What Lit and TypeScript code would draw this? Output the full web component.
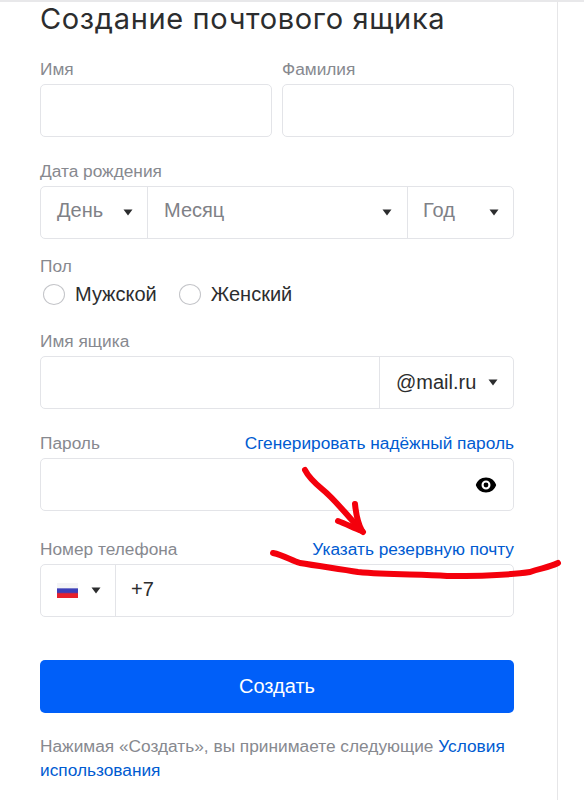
import { LitElement, html, css, svg } from "lit";
import { customElement } from "lit/decorators.js";

const caret = html`<svg class="caret" width="10" height="7" viewBox="0 0 10 7"><path d="M0.5 0.5h9L5 6.5z" fill="#2c2d2e"/></svg>`;

@customElement("app-root")
export class AppRoot extends LitElement {
  static styles = css`
    :host { display: block; position: relative; width: 584px; height: 800px; overflow: hidden; background: #fff;
      font-family: "Liberation Sans", Arial, sans-serif; color: #2c2d2e; }
    .panel { box-sizing: border-box; width: 558px; height: 800px; padding: 0 43px 0 40px; border-right: 1px solid #e6e6e8; border-top: 2px solid #e8e8ea; }
    .rule { position: absolute; top: 0; left: 558px; right: 0; height: 2px; background: #e8e8ea; }
    h1 { margin: 0; font: 400 29px/34px "Inter", "Noto Sans", sans-serif; letter-spacing: 0.65px; color: #2c2d2e; height: 34px; }
    .label { font-size: 17.3px; line-height: 20px; color: #87898f; display: flex; justify-content: space-between; margin-bottom: 5px; }
    a { color: #005bd1; text-decoration: none; }
    .row { display: grid; grid-template-columns: 232px 232px; gap: 10px; margin-top: 23px; }
    .field { box-sizing: border-box; border: 1px solid #e3e4e8; border-radius: 5px; height: 53px; display: flex; align-items: stretch; background: #fff; }
    .date { margin-top: 24px; }
    .sex { margin-top: 17px; }
    .sex .label { margin-bottom: 4px; }
    .box { margin-top: 23px; }
    .pass { margin-top: 24px; }
    .phone { margin-top: 28px; }
    .cell { display: flex; align-items: center; justify-content: space-between; box-sizing: border-box; font-size: 20px; color: #7f8187; }
    .cell .txt { position: relative; top: -2px; }
    .sep { border-left: 1px solid #e3e4e8; }
    .day { width: 106px; padding: 0 14px 0 16px; }
    .month { width: 260px; padding: 0 15px 0 16px; }
    .year { flex: 1; padding: 0 14px 0 15px; }
    .gender { display: flex; align-items: center; height: 28px; padding-left: 3px; font-size: 20px; }
    .radio { width: 22px; height: 21px; box-sizing: border-box; border: 1px solid #c4c5c9; border-radius: 50%; margin-right: 10px; }
    .gender span.t { margin-right: 22px; }
    .grow { flex: 1; }
    .domain { width: 134px; padding: 0 15px 0 16px; color: #2c2d2e; }
    .eye { display: flex; align-items: center; padding-right: 16px; }
    .flagcell { width: 75px; display: flex; align-items: center; padding-left: 16px; box-sizing: border-box; gap: 13px; border-right: 1px solid #e3e4e8; }
    .flag { width: 21px; height: 15px; background: linear-gradient(#f4f4f6 0 30%, #3c3fb8 40% 62%, #e8202c 72% 100%); }
    .code { font-size: 20px; padding: 0 0 2px 15px; display: flex; align-items: center; color: #2c2d2e; }
    button { display: block; width: 474px; height: 53px; margin-top: 43px; border: 0; border-radius: 5px; background: #005ff9; color: #fff; font: 400 20px "Liberation Sans", Arial, sans-serif; }
    .terms { font-size: 17.3px; line-height: 24px; color: #87898f; margin-top: 21px; }
    .ink { position: absolute; inset: 0; pointer-events: none; }
  `;

  render() {
    return html`
      <div class="rule"></div>
      <div class="panel">
        <h1>Создание почтового ящика</h1>
        <div class="row">
          <div><div class="label">Имя</div><div class="field"></div></div>
          <div><div class="label">Фамилия</div><div class="field"></div></div>
        </div>
        <div class="date">
          <div class="label">Дата рождения</div>
          <div class="field">
            <div class="cell day"><span class="txt">День</span> ${caret}</div>
            <div class="cell month sep"><span class="txt">Месяц</span> ${caret}</div>
            <div class="cell year sep"><span class="txt">Год</span> ${caret}</div>
          </div>
        </div>
        <div class="sex">
          <div class="label">Пол</div>
          <div class="gender">
            <span class="radio"></span><span class="t">Мужской</span>
            <span class="radio"></span><span>Женский</span>
          </div>
        </div>
        <div class="box">
          <div class="label">Имя ящика</div>
          <div class="field">
            <div class="grow"></div>
            <div class="cell domain sep">@mail.ru ${caret}</div>
          </div>
        </div>
        <div class="pass">
          <div class="label">Пароль <a>Сгенерировать надёжный пароль</a></div>
          <div class="field">
            <div class="grow"></div>
            <div class="eye">
              <svg width="22" height="16" viewBox="0 0 22 16"><path fill="#000" fill-rule="evenodd" d="M11 0.5C6 0.5 2.2 3.6 0.8 8 2.2 12.4 6 15.500 11 15.500S19.800 12.400 21.200 8C19.800 3.600 16 .5 11 .5zM11 3.500a4.500 4.500 0 1 1 0 9 4.500 4.500 0 0 1 0-9z"/><circle cx="11" cy="8" r="2.400" fill="#000"/></svg>
            </div>
          </div>
        </div>
        <div class="phone">
          <div class="label">Номер телефона <a>Указать резервную почту</a></div>
          <div class="field">
            <div class="flagcell"><div class="flag"></div>${caret}</div>
            <div class="code">+7</div>
          </div>
        </div>
        <button>Создать</button>
        <div class="terms">Нажимая «Создать», вы принимаете следующие <a>Условия</a> <a>использования</a></div>
      </div>
      <svg class="ink" width="584" height="800" viewBox="0 0 584 800" fill="none" stroke="#f4000c" stroke-width="6" stroke-linecap="round" stroke-linejoin="round">
        ${svg`<path d="M305 470C309 478 316 484 322 489 332 497 341 508 350 518L363 532"/>
        <path d="M355 504C356 514 357 522 362 531 354 528 346 524 338 521"/>
        <path d="M273 553C283 555 291 560 300 563 318 566 340 569 358 572 390 575 420 574 447 576 480 576 510 575 530 572 540 568 548 568 558 563"/>`}
      </svg>
    `;
  }
}
